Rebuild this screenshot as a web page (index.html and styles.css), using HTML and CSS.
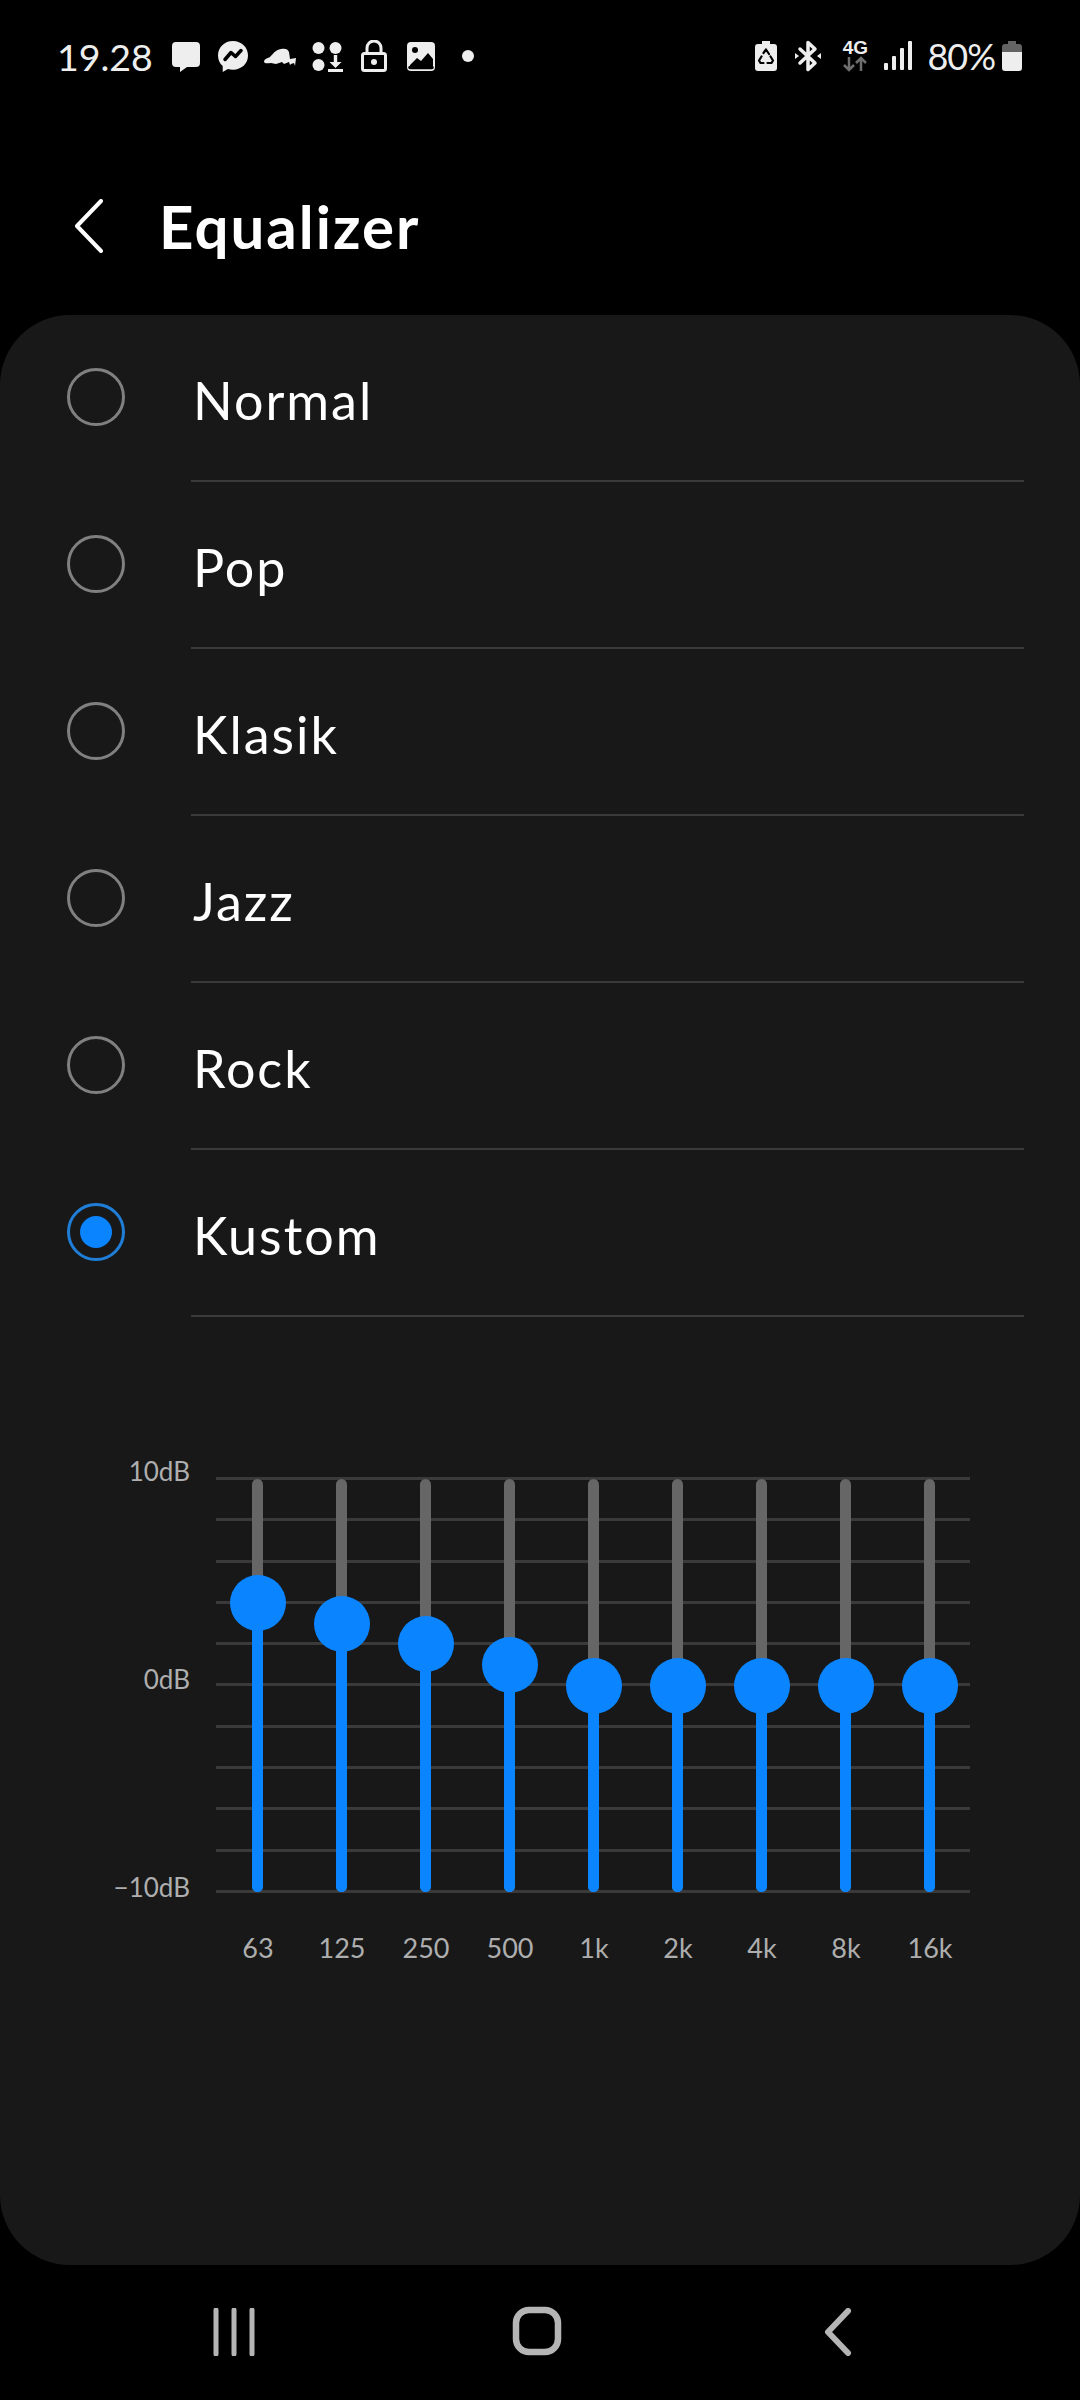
FILE: index.html
```html
<!DOCTYPE html>
<html lang="id">
<head>
<meta charset="utf-8">
<title>Equalizer</title>
<link rel="stylesheet" href="styles.css">
</head>
<body>
<div class="screen">
  <div class="status">
    <span class="time">19.28</span>
    <div class="notifs">
      <span class="slot"><svg viewBox="0 0 32 32" class="ico"><path d="M6 2h20a4 4 0 0 1 4 4v17a4 4 0 0 1-4 4h-9l-7 5v-5H6a4 4 0 0 1-4-4V6a4 4 0 0 1 4-4z"/></svg></span>
      <span class="slot"><svg viewBox="0 0 32 32" class="ico"><path d="M16 1C7.500 1 1 7.300 1 15.500c0 4.300 1.800 8 4.700 10.600V32l5.200-3c1.600.5 3.300.7 5.100.7 8.500 0 15-6.100 15-14.200S24.500 1 16 1z"/><path d="M8 19.500l6-7 4.500 4 5.500-6" class="cut"/></svg></span>
      <span class="slot"><svg viewBox="0 0 32 32" class="ico"><path d="M0 22c0-3 4-4 6-5 3-3 5-7 11-8 4-1 7 0 8 3l1 7 6-1-1 8-1-3-3 1-1 1-1-3-5 2-2-2-6 2-5-1c-3 0-6 1-7-1z"/></svg></span>
      <span class="slot"><svg viewBox="0 0 32 32" class="ico"><circle cx="7.500" cy="8" r="6"/><circle cx="24.500" cy="8" r="6"/><circle cx="7.500" cy="25" r="6"/><path d="M22.800 15h3.400v7h4.300l-6 6-6-6h4.300zM17 29h15v3H17z"/></svg></span>
      <span class="slot"><svg viewBox="0 0 32 32" class="ico"><path d="M9 14V8a7 7 0 0 1 14 0v6" class="line"/><rect x="4.500" y="13.500" width="23" height="17" rx="2" class="line"/><circle cx="16" cy="22" r="3"/></svg></span>
      <span class="slot"><svg viewBox="0 0 32 32" class="ico"><rect x="2" y="2" width="28" height="29" rx="4"/><circle cx="10" cy="10" r="3" class="hole"/><path d="M5 25l7-7 4 3 7-8 5 6v8H5z" class="hole"/><path d="M5 27.500h22" class="cut"/></svg></span>
      <span class="slot"><svg viewBox="0 0 32 32" class="ico"><circle cx="16" cy="16" r="6"/></svg></span>
    </div>
    <div class="systray">
      <svg viewBox="0 0 24 32" class="ico tray-saver"><path d="M8 1h8v3h4a3 3 0 0 1 3 3v21a3 3 0 0 1-3 3H4a3 3 0 0 1-3-3V7a3 3 0 0 1 3-3h4z"/><path d="M9.500 13l2.500-3.500 3 4.500M16.500 16.500l2.500 4-1.500 2.500h-4M9.500 23H6.500l-1.500-2.500 2.500-4" class="cut thin"/></svg>
      <svg viewBox="0 0 28 32" class="ico tray-bt"><path d="M6 9l15 14-7 6.500V2.500L21 9 6 23" class="line bold"/><path d="M1 13l4 3-4 3zM27 13l-4 3 4 3z"/></svg>
      <span class="net"><span class="net-label">4G</span>
        <svg viewBox="0 0 26 16" class="net-arrows"><path d="M7 1v13M2 9l5 5 5-5M19 15V2M14 7l5-5 5 5"/></svg></span>
      <svg viewBox="0 0 28 30" class="ico tray-signal"><rect x="0" y="22" width="4" height="7" rx="1"/><rect x="8" y="15" width="4" height="14" rx="1"/><rect x="16" y="7" width="4" height="22" rx="1"/><rect x="24" y="0" width="4" height="29" rx="1"/></svg>
      <span class="pct">80%</span>
      <svg viewBox="0 0 22 32" class="ico tray-batt"><path d="M7 1h8v3h3a3 3 0 0 1 3 3v5H1V7a3 3 0 0 1 3-3h3z" class="batt-empty"/><path d="M1 12h20v16a3 3 0 0 1-3 3H4a3 3 0 0 1-3-3z"/></svg>
    </div>
  </div>

  <header class="appbar">
    <svg viewBox="0 0 30 54" class="back"><path d="M27 2L3 27l24 25"/></svg>
    <h1 class="title">Equalizer</h1>
  </header>

  <main class="card">
    <ul class="presets">
      <li class="preset"><span class="radio"></span><span class="preset-label">Normal</span></li>
      <li class="preset"><span class="radio"></span><span class="preset-label">Pop</span></li>
      <li class="preset"><span class="radio"></span><span class="preset-label">Klasik</span></li>
      <li class="preset"><span class="radio"></span><span class="preset-label">Jazz</span></li>
      <li class="preset"><span class="radio"></span><span class="preset-label">Rock</span></li>
      <li class="preset"><span class="radio radio-on"></span><span class="preset-label">Kustom</span></li>
    </ul>

    <section class="chart">
      <div class="y-axis"><span>10dB</span><span>0dB</span><span>−10dB</span></div>
      <div class="plot">
        <div class="grid-lines"><i></i><i></i><i></i><i></i><i></i><i></i><i></i><i></i><i></i><i></i><i></i></div>
        <div class="bands">
          <div class="band"><span class="track"></span><span class="fill" style="height:70%"></span><span class="knob" style="bottom:70%"></span></div>
          <div class="band"><span class="track"></span><span class="fill" style="height:65%"></span><span class="knob" style="bottom:65%"></span></div>
          <div class="band"><span class="track"></span><span class="fill" style="height:60%"></span><span class="knob" style="bottom:60%"></span></div>
          <div class="band"><span class="track"></span><span class="fill" style="height:55%"></span><span class="knob" style="bottom:55%"></span></div>
          <div class="band"><span class="track"></span><span class="fill" style="height:50%"></span><span class="knob" style="bottom:50%"></span></div>
          <div class="band"><span class="track"></span><span class="fill" style="height:50%"></span><span class="knob" style="bottom:50%"></span></div>
          <div class="band"><span class="track"></span><span class="fill" style="height:50%"></span><span class="knob" style="bottom:50%"></span></div>
          <div class="band"><span class="track"></span><span class="fill" style="height:50%"></span><span class="knob" style="bottom:50%"></span></div>
          <div class="band"><span class="track"></span><span class="fill" style="height:50%"></span><span class="knob" style="bottom:50%"></span></div>
        </div>
      </div>
      <div class="freqs"><span>63</span><span>125</span><span>250</span><span>500</span><span>1k</span><span>2k</span><span>4k</span><span>8k</span><span>16k</span></div>
    </section>
  </main>

  <nav class="navbar">
    <svg viewBox="0 0 44 48" class="nav-ico nav-recents"><path d="M3 2v44M21 2v44M39 2v44"/></svg>
    <svg viewBox="0 0 50 50" class="nav-ico nav-home"><rect x="4" y="4" width="42" height="42" rx="13"/></svg>
    <svg viewBox="0 0 30 48" class="nav-ico nav-back"><path d="M26 3L6 24l20 21"/></svg>
  </nav>
</div>
</body>
</html>
```
FILE: styles.css
```css
* { box-sizing: border-box; }
html, body { margin: 0; padding: 0; background: #000; }
.screen {
  width: 1080px;
  height: 2400px;
  display: flex;
  flex-direction: column;
  background: #000;
  color: #fff;
  font-family: Lato, "Noto Sans", sans-serif;
}

/* status bar */
.status {
  height: 112px;
  flex: none;
  display: flex;
  align-items: center;
  padding: 0 57px;
  color: #eee;
}
.time { font-size: 37.500px; width: 105px; }
.notifs { display: flex; }
.slot { width: 47px; display: flex; justify-content: center; }
.ico { display: block; width: 32px; height: 32px; fill: #eee; }
.cut { fill: none; stroke: #000; stroke-width: 3.5; stroke-linejoin: round; stroke-linecap: round; }
.thin { stroke-width: 2.2; }
.line { fill: none; stroke: #eee; stroke-width: 3; }
.bold { stroke-width: 3.5; stroke-linecap: round; stroke-linejoin: round; }
.hole { fill: #000; }
.systray { margin-left: auto; display: flex; align-items: center; }
.tray-saver { width: 24px; }
.tray-bt { width: 28px; margin-left: 16px; }
.tray-signal { width: 28px; height: 30px; margin-left: 15px; }
.tray-batt { width: 22px; margin-left: 6px; }
.net { display: flex; flex-direction: column; align-items: center; width: 28px; margin-left: 19px; }
.net-label { font: 700 19px/16px "Liberation Sans", sans-serif; color: #eee; }
.net-arrows { width: 26px; height: 16px; fill: none; stroke: #6e6e6e; stroke-width: 2.5; }
.pct { font-size: 36px; margin-left: 15px; letter-spacing: -1px; }
.batt-empty { fill: #636363; }

/* app bar */
.appbar {
  height: 203px;
  flex: none;
  display: flex;
  align-items: flex-start;
  padding: 87px 0 0 74px;
}
.back { width: 30px; height: 54px; fill: none; stroke: #fff; stroke-width: 4; stroke-linecap: round; stroke-linejoin: round; }
.title { margin: -8px 0 0 55px; font-size: 60px; line-height: 70px; font-weight: 700; letter-spacing: 2px; }

/* card */
.card {
  height: 1950px;
  flex: none;
  background: #181818;
  border-radius: 70px;
}
.presets { list-style: none; margin: 0; padding: 0; }
.preset {
  height: 167px;
  display: flex;
  align-items: stretch;
  padding: 0 56px 0 67px;
}
.radio {
  flex: none;
  width: 58px;
  height: 58px;
  margin-top: 53px;
  border: 3px solid #808080;
  border-radius: 50%;
  display: flex;
  align-items: center;
  justify-content: center;
}
.radio-on { border-color: #1f7fd8; }
.radio-on::after { content: ""; width: 32px; height: 32px; border-radius: 50%; background: #0a84ff; }
.preset-label {
  flex: 1;
  margin-left: 66px;
  padding: 4px 0 0 2px;
  border-bottom: 2px solid #3a3a3a;
  display: flex;
  align-items: center;
  font-size: 52px;
  letter-spacing: 2px;
  color: #fff;
}

/* chart */
.chart {
  margin-top: 160px;
  display: grid;
  grid-template-columns: 190px 754px;
  column-gap: 26px;
  color: #aeaeae;
}
.y-axis {
  height: 446px;
  margin-top: -21px;
  display: flex;
  flex-direction: column;
  justify-content: space-between;
  align-items: flex-end;
  font-size: 26px;
  line-height: 30px;
}
.plot { position: relative; height: 416px; }
.grid-lines { height: 100%; display: flex; flex-direction: column; justify-content: space-between; }
.grid-lines i { display: block; height: 3px; background: #3a3a3a; }
.bands { position: absolute; top: 2px; bottom: 1px; left: 0; display: grid; grid-template-columns: repeat(9, 84px); }
.band { position: relative; }
.track, .fill { position: absolute; left: 36px; width: 11px; border-radius: 6px; }
.track { top: 0; bottom: 0; background: #666; }
.fill { bottom: 0; background: #0a84ff; }
.knob {
  position: absolute;
  left: 14px;
  width: 56px;
  height: 56px;
  border-radius: 50%;
  background: #0a84ff;
  transform: translateY(50%);
}
.freqs {
  grid-column: 2;
  margin-top: 31px;
  display: grid;
  grid-template-columns: repeat(9, 84px);
  text-align: center;
  font-size: 27px;
  line-height: 30px;
}

/* nav bar */
.navbar { position: relative; flex: 1; }
.nav-ico { position: absolute; fill: none; stroke: #b5b5b5; stroke-linecap: round; stroke-linejoin: round; }
.nav-recents { left: 213px; top: 43px; width: 44px; height: 48px; stroke-width: 5; }
.nav-home { left: 512px; top: 41px; width: 50px; height: 50px; stroke-width: 6.500; }
.nav-back { left: 822px; top: 43px; width: 30px; height: 48px; stroke-width: 6; }
```
